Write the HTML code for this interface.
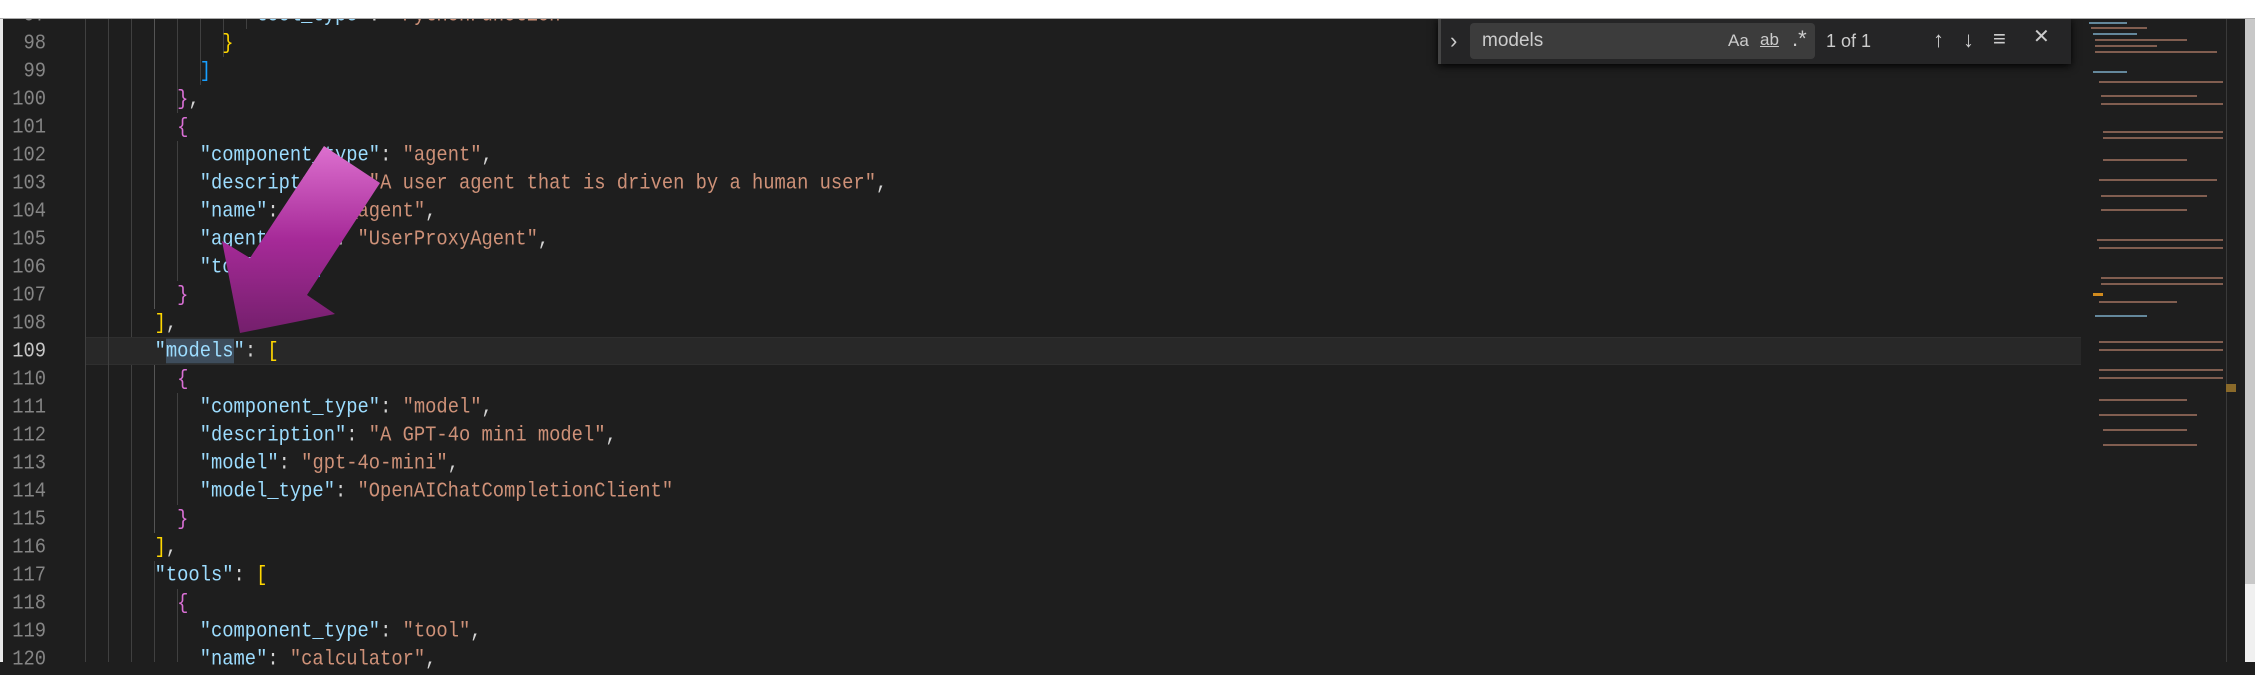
<!DOCTYPE html>
<html><head><meta charset="utf-8">
<style>
html,body{margin:0;padding:0;width:2255px;height:662px;overflow:hidden;background:#1e1e1e;}
.top{position:absolute;left:0;top:0;width:2255px;height:18px;background:#fff;border-bottom:1px solid #aaa;z-index:5}
.lstrip{position:absolute;left:0;top:0;width:3px;height:662px;background:#e8e8e8;z-index:4}
.ln{position:absolute;left:0;width:46px;text-align:right;font:18.8px "Liberation Mono",monospace;color:#858585;height:28px;line-height:28px;transform:scaleY(1.12)}
.code{position:absolute;left:87px;font:18.8px "Liberation Mono",monospace;color:#d4d4d4;white-space:pre;height:28px;line-height:28px;transform:scaleY(1.12);transform-origin:0 50%}
.k{color:#9cdcfe}.s{color:#ce9178}.y{color:#ffd700}.p{color:#da70d6}.b{color:#179fff}
.g{position:absolute;width:1px;background:#404040}
.cur{position:absolute;left:85px;top:337px;width:1996px;height:28px;background:#282828;border-top:1px solid #2f2f2f;border-bottom:1px solid #2f2f2f;box-sizing:border-box}
.sel{background:#3e4d5c}
.find{position:absolute;left:1438px;top:18px;width:633px;height:46px;background:#252526;box-shadow:0 2px 8px #000;border-left:3px solid #454545;box-sizing:border-box;z-index:3;font-family:"Liberation Sans",sans-serif;color:#ccc}
.inp{position:absolute;left:29px;top:5px;width:345px;height:36px;background:#3c3c3c;border-radius:4px}
.mm{position:absolute;left:2087px;top:20px;width:138px;height:450px}
</style></head><body>
<div class="top"></div><div class="lstrip"></div>
<div class="cur"></div>
<div class="g" style="left:85px;top:0;height:662px"></div>
<div class="g" style="left:108px;top:0;height:662px"></div>
<div class="g" style="left:131px;top:0;height:337px"></div>
<div class="g" style="left:131px;top:365px;height:297px"></div>
<div class="g" style="left:154px;top:0;height:309px;background:#555"></div>
<div class="g" style="left:154px;top:365px;height:168px;background:#555"></div>
<div class="g" style="left:154px;top:561px;height:101px"></div>
<div class="g" style="left:177px;top:0;height:113px"></div>
<div class="g" style="left:177px;top:141px;height:140px"></div>
<div class="g" style="left:177px;top:393px;height:112px"></div>
<div class="g" style="left:177px;top:589px;height:73px"></div>
<div class="g" style="left:200px;top:0;height:85px"></div>
<div class="g" style="left:223px;top:0;height:57px"></div>
<div class="g" style="left:246px;top:0;height:29px"></div>

<div class="ln" style="top:1px">97</div><div class="code" style="top:1px">              <span class="k">"tool_type"</span>: <span class="s">"PythonFunction"</span></div>
<div class="ln" style="top:29px">98</div><div class="code" style="top:29px">            <span class="y">}</span></div>
<div class="ln" style="top:57px">99</div><div class="code" style="top:57px">          <span class="b">]</span></div>
<div class="ln" style="top:85px">100</div><div class="code" style="top:85px">        <span class="p">}</span>,</div>
<div class="ln" style="top:113px">101</div><div class="code" style="top:113px">        <span class="p">{</span></div>
<div class="ln" style="top:141px">102</div><div class="code" style="top:141px">          <span class="k">"component_type"</span>: <span class="s">"agent"</span>,</div>
<div class="ln" style="top:169px">103</div><div class="code" style="top:169px">          <span class="k">"description"</span>: <span class="s">"A user agent that is driven by a human user"</span>,</div>
<div class="ln" style="top:197px">104</div><div class="code" style="top:197px">          <span class="k">"name"</span>: <span class="s">"user_agent"</span>,</div>
<div class="ln" style="top:225px">105</div><div class="code" style="top:225px">          <span class="k">"agent_type"</span>: <span class="s">"UserProxyAgent"</span>,</div>
<div class="ln" style="top:253px">106</div><div class="code" style="top:253px">          <span class="k">"tools"</span>: <span class="b">[]</span></div>
<div class="ln" style="top:281px">107</div><div class="code" style="top:281px">        <span class="p">}</span></div>
<div class="ln" style="top:309px">108</div><div class="code" style="top:309px">      <span class="y">]</span>,</div>
<div class="ln" style="top:337px;color:#c6c6c6">109</div><div class="code" style="top:337px">      <span class="k">"<span class="sel">models</span>"</span>: <span class="y">[</span></div>
<div class="ln" style="top:365px">110</div><div class="code" style="top:365px">        <span class="p">{</span></div>
<div class="ln" style="top:393px">111</div><div class="code" style="top:393px">          <span class="k">"component_type"</span>: <span class="s">"model"</span>,</div>
<div class="ln" style="top:421px">112</div><div class="code" style="top:421px">          <span class="k">"description"</span>: <span class="s">"A GPT-4o mini model"</span>,</div>
<div class="ln" style="top:449px">113</div><div class="code" style="top:449px">          <span class="k">"model"</span>: <span class="s">"gpt-4o-mini"</span>,</div>
<div class="ln" style="top:477px">114</div><div class="code" style="top:477px">          <span class="k">"model_type"</span>: <span class="s">"OpenAIChatCompletionClient"</span></div>
<div class="ln" style="top:505px">115</div><div class="code" style="top:505px">        <span class="p">}</span></div>
<div class="ln" style="top:533px">116</div><div class="code" style="top:533px">      <span class="y">]</span>,</div>
<div class="ln" style="top:561px">117</div><div class="code" style="top:561px">      <span class="k">"tools"</span>: <span class="y">[</span></div>
<div class="ln" style="top:589px">118</div><div class="code" style="top:589px">        <span class="p">{</span></div>
<div class="ln" style="top:617px">119</div><div class="code" style="top:617px">          <span class="k">"component_type"</span>: <span class="s">"tool"</span>,</div>
<div class="ln" style="top:645px">120</div><div class="code" style="top:645px">          <span class="k">"name"</span>: <span class="s">"calculator"</span>,</div>

<svg style="position:absolute;left:0;top:0" width="2255" height="662">
<defs><linearGradient id="ag" x1="0" y1="0" x2="0" y2="1"><stop offset="0" stop-color="#dd70cf"/><stop offset="0.5" stop-color="#a62a98"/><stop offset="1" stop-color="#741f6c"/></linearGradient></defs>
<polygon points="324,146 380,183 307,295 335,314 240,333 222,241 250,258" fill="url(#ag)"/>
</svg>

<div class="find">
<div style="position:absolute;left:9px;top:10px;font-size:22px;color:#ccc">&#8250;</div>
<div class="inp">
<div style="position:absolute;left:12px;top:7px;font-size:19px;color:#ccc">models</div>
<div style="position:absolute;left:258px;top:8px;font-size:17px">Aa</div>
<div style="position:absolute;left:290px;top:7px;font-size:17px;text-decoration:underline">ab</div>
<div style="position:absolute;left:322px;top:3px;font-size:22px">.*</div>
</div>
<div style="position:absolute;left:385px;top:13px;font-size:18px">1 of 1</div>
<div style="position:absolute;left:492px;top:9px;font-size:22px">&#8593;</div>
<div style="position:absolute;left:522px;top:9px;font-size:22px">&#8595;</div>
<div style="position:absolute;left:552px;top:8px;font-size:22px">&#8801;</div>
<div style="position:absolute;left:592px;top:6px;font-size:20px">&#10005;</div>
</div>

<svg class="mm" width="138" height="450">
<g stroke-width="1.5" opacity="0.75">
<line x1="2" y1="3" x2="40" y2="3" stroke="#9cdcfe"/><line x1="4" y1="8" x2="60" y2="8" stroke="#ce9178"/>
<line x1="6" y1="14" x2="50" y2="14" stroke="#9cdcfe"/><line x1="8" y1="20" x2="100" y2="20" stroke="#ce9178"/>
<line x1="8" y1="26" x2="70" y2="26" stroke="#ce9178"/><line x1="8" y1="32" x2="130" y2="32" stroke="#ce9178"/>
<line x1="6" y1="52" x2="40" y2="52" stroke="#9cdcfe"/><line x1="12" y1="62" x2="136" y2="62" stroke="#ce9178"/>
<line x1="14" y1="76" x2="110" y2="76" stroke="#ce9178"/><line x1="14" y1="84" x2="136" y2="84" stroke="#ce9178"/>
<line x1="16" y1="112" x2="136" y2="112" stroke="#ce9178"/><line x1="16" y1="118" x2="136" y2="118" stroke="#ce9178"/>
<line x1="16" y1="140" x2="100" y2="140" stroke="#ce9178"/><line x1="12" y1="160" x2="130" y2="160" stroke="#ce9178"/>
<line x1="14" y1="176" x2="120" y2="176" stroke="#ce9178"/><line x1="14" y1="190" x2="100" y2="190" stroke="#ce9178"/>
<line x1="10" y1="220" x2="136" y2="220" stroke="#ce9178"/><line x1="12" y1="228" x2="136" y2="228" stroke="#ce9178"/>
<line x1="14" y1="258" x2="136" y2="258" stroke="#ce9178"/><line x1="14" y1="264" x2="136" y2="264" stroke="#ce9178"/>
<line x1="12" y1="282" x2="90" y2="282" stroke="#ce9178"/><line x1="8" y1="296" x2="60" y2="296" stroke="#9cdcfe"/>
<line x1="12" y1="322" x2="136" y2="322" stroke="#ce9178"/><line x1="12" y1="330" x2="136" y2="330" stroke="#ce9178"/>
<line x1="12" y1="350" x2="136" y2="350" stroke="#ce9178"/><line x1="12" y1="358" x2="136" y2="358" stroke="#ce9178"/>
<line x1="12" y1="380" x2="100" y2="380" stroke="#ce9178"/><line x1="12" y1="395" x2="110" y2="395" stroke="#ce9178"/>
<line x1="16" y1="410" x2="100" y2="410" stroke="#ce9178"/><line x1="16" y1="425" x2="110" y2="425" stroke="#ce9178"/>
</g>
<rect x="6" y="273" width="10" height="3" fill="#d18b1e"/>
</svg>
<div style="position:absolute;left:2226px;top:18px;width:1px;height:644px;background:#3a3a3a"></div>
<div style="position:absolute;left:2226px;top:384px;width:10px;height:8px;background:#8a6a2a"></div>
<div style="position:absolute;left:2245px;top:18px;width:10px;height:566px;background:#c8c8c8"></div>
<div style="position:absolute;left:2245px;top:584px;width:10px;height:78px;background:#f0f0f0"></div>
</body></html>
